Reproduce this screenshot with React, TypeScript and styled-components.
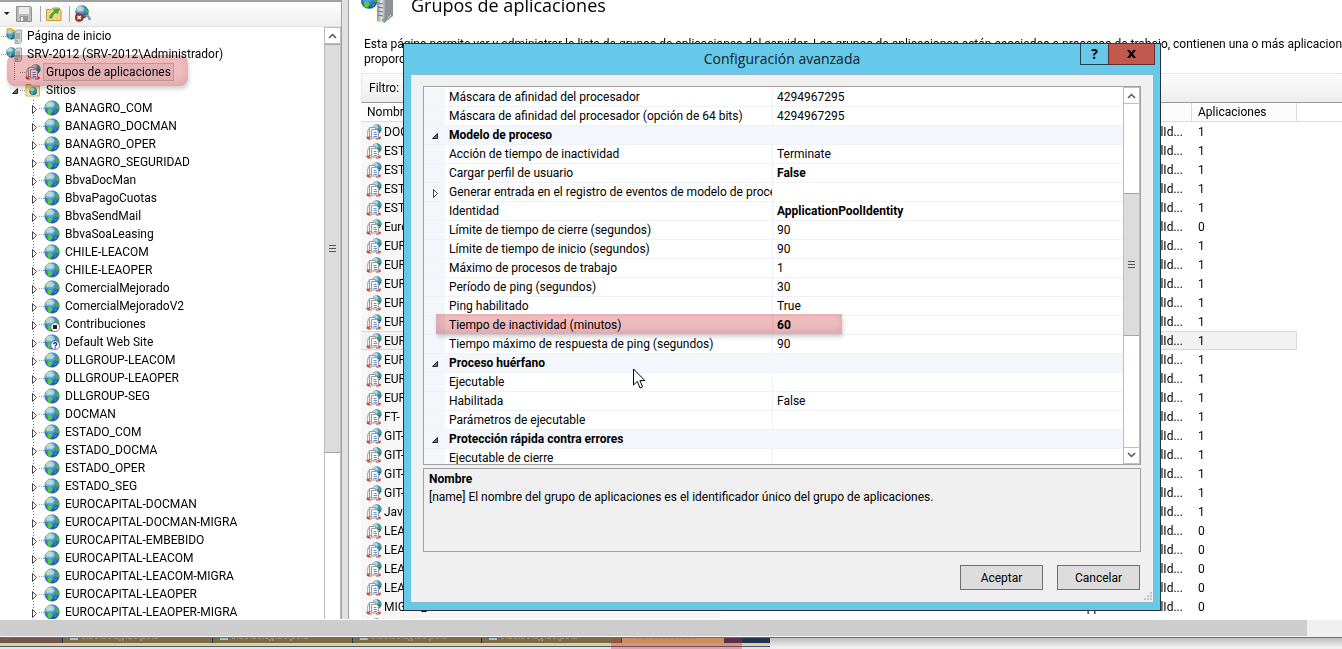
import React from "react";
import styled, { createGlobalStyle, css } from "styled-components";

const GlobalStyle = createGlobalStyle`
  *, *::before, *::after { box-sizing: border-box; }
  body {
    margin: 0;
    background: #fff;
    color: #000;
    font: 12px/18px Roboto, "Liberation Sans", sans-serif;
    overflow: hidden;
  }
  ul { list-style: none; margin: 0; padding: 0; }
  button { font: inherit; color: inherit; padding: 0; }
`;

/* ---------- page frame ---------- */

const Screen = styled.div`
  position: relative;
  display: flex;
  flex-direction: column;
  height: 100vh;
  overflow: hidden;
`;

const Workspace = styled.div`
  display: flex;
  flex: 1;
  min-height: 0;
`;

const Splitter = styled.div`
  flex: none;
  width: 8px;
  background: #e2e2e2;
  border: solid #a0a0a0;
  border-width: 0 1px;
`;

/* ---------- left panel ---------- */

const Sidebar = styled.aside`
  position: relative;
  display: flex;
  flex-direction: column;
  flex: none;
  width: 341px;
  border-top: 2px solid #a0a0a0;
`;

const Toolbar = styled.div`
  display: flex;
  align-items: center;
  gap: 5px;
  height: 25px;
  padding-left: 4px;
  background: linear-gradient(#fdfdfd, #efefef);
  border-bottom: 1px solid #e2e2e2;
`;

const ToolButton = styled.button`
  display: flex;
  border: 0;
  background: none;
`;

const ToolDivider = styled.span`
  width: 1px;
  height: 16px;
  margin-left: 2px;
  background: #a8a8a8;
`;

const TreeArea = styled.div`
  display: flex;
  flex: 1;
  min-height: 0;
`;

const Tree = styled.ul`
  flex: 1;
  overflow: hidden;
`;

const TreeItem = styled.li<{ $depth: number }>`
  display: flex;
  align-items: center;
  height: 18px;
  padding-left: ${(p) => (p.$depth === 0 ? 0 : p.$depth * 19 - 8)}px;
  white-space: nowrap;
`;

const Twist = styled.button`
  display: flex;
  width: 8px;
  height: 18px;
  border: 0;
  background: none;
`;

const Branch = styled.span`
  width: 6px;
  height: 1px;
  background: repeating-linear-gradient(90deg, #fff 0 1px, #9a9a9a 1px 2px);
`;

const TreeLabel = styled.span<{ $selected?: boolean }>`
  margin-left: 2px;
  padding: 0 3px;
  line-height: 18px;
  ${(p) =>
    p.$selected &&
    css`
      background: #f2f2f2;
      box-shadow: inset 0 0 0 1px #cfcfcf;
    `}
`;

/* ---------- scroll bars ---------- */

const Scroll = styled.div`
  display: flex;
  flex-direction: column;
  flex: none;
  width: 17px;
  background: #fff;
  border: solid #bdbdbd;
  border-width: 0 1px;
`;

const ScrollArrow = styled.button`
  display: flex;
  align-items: center;
  justify-content: center;
  flex: none;
  height: 17px;
  border: solid #bdbdbd;
  border-width: 1px 0;
  background: #fff;
`;

const Gap = styled.div<{ $grow: number }>`
  flex: ${(p) => p.$grow} 1 0;
`;

const Thumb = styled.div<{ $grow: number }>`
  display: flex;
  align-items: center;
  justify-content: center;
  flex: ${(p) => p.$grow} 1 0;
  background: #dcdcdc;
  border: solid #a6a6a6;
  border-width: 1px 0;
`;

const BottomScroll = styled.div`
  display: flex;
  flex: none;
  height: 17px;
  margin-top: 1px;
  padding-right: 35px;
  background: #f0f0f0;
  border-bottom: 1px solid #f4f4f4;
`;

const BottomThumb = styled.div`
  flex: 1;
  background: #cdcdcd;
`;

/* ---------- main panel ---------- */

const Main = styled.main`
  flex: 1;
  min-width: 0;
  padding-left: 12px;
  overflow: hidden;
`;

const PageHead = styled.header`
  display: flex;
  gap: 18px;
  height: 37px;
  overflow: hidden;
`;

const PageTitle = styled.h1`
  margin: -8px 0 0;
  font: 400 18px/26px "Open Sans", "Noto Sans", sans-serif;
`;

const Intro = styled.p`
  margin: 0;
  padding-left: 3px;
  height: 36px;
  line-height: 15px;
  white-space: nowrap;
`;

const FilterBar = styled.div`
  display: flex;
  align-items: center;
  height: 30px;
  padding-left: 7px;
  background: linear-gradient(#fcfcfc, #ededed);
  border: solid #e6e6e6;
  border-width: 1px 0 0 1px;
  border-bottom: 1px solid #989898;
`;

const PoolTable = styled.table`
  width: 100%;
  table-layout: fixed;
  border-collapse: separate;
  border-spacing: 0;

  th, td {
    height: 19px;
    padding: 0 0 0 6px;
    line-height: 18px;
    text-align: left;
    font-weight: 400;
    white-space: nowrap;
    overflow: hidden;
  }
  th {
    border-right: 1px solid #dcdcdc;
    border-bottom: 1px solid #dcdcdc;
    background: #fcfcfc;
  }
  th:last-child { border-right: 0; background: #fff; }
  td:first-child { padding-left: 5px; background: #f7f7f7; }
`;

const PoolRow = styled.tr<{ $selected?: boolean }>`
  ${(p) =>
    p.$selected &&
    css`
      && td:not(:last-child) {
        background: #f2f2f2;
        border: solid #d9d9d9;
        border-width: 1px 0;
        line-height: 16px;
      }
      && td:nth-child(4) { border-right-width: 1px; }
    `}
`;

const PoolName = styled.span`
  display: flex;
  align-items: center;
  gap: 2px;
`;

/* ---------- dialog ---------- */

const Dialog = styled.section`
  position: absolute;
  top: 43px;
  left: 403px;
  right: 181px;
  padding: 0 7px 7px;
  background: #67c9e9;
  border: 1px solid #2c3038;
`;

const TitleBar = styled.div`
  display: grid;
  grid-template-columns: 1fr auto 1fr;
  height: 30px;
`;

const DialogTitle = styled.h2`
  grid-column: 2;
  margin: 0;
  font: 400 14px/30px "Open Sans", "Noto Sans", sans-serif;
  color: #10202c;
`;

const CaptionButtons = styled.div`
  display: flex;
  justify-content: flex-end;
  margin: -1px -2px 0 0;
`;

const CaptionButton = styled.button<{ $close?: boolean }>`
  display: flex;
  align-items: center;
  justify-content: center;
  width: ${(p) => (p.$close ? 47 : 29)}px;
  height: 22px;
  margin-left: -1px;
  border: 1px solid ${(p) => (p.$close ? "#5c2f33" : "#22414e")};
  background: ${(p) => (p.$close ? "#c2594f" : "#67c9e9")};
  font: 700 14px/20px "Open Sans", sans-serif;
`;

const DialogBody = styled.div`
  position: relative;
  display: flex;
  flex-direction: column;
  padding: 11px 12px 12px;
  background: #f0f0f0;
  border: solid #8fb9c8;
  border-width: 1px 0;
`;

const GridFrame = styled.div`
  display: flex;
  height: 379px;
  border: 1px solid #a0a0a0;
  background: #fff;
  overflow: hidden;
`;

const GridView = styled.div`
  flex: 1;
  min-width: 0;
  padding-top: 1px;
  overflow: hidden;
`;

const PropTable = styled.table`
  width: 100%;
  table-layout: fixed;
  border-collapse: separate;
  border-spacing: 0;

  th, td {
    height: 19px;
    padding: 0 0 0 4px;
    font-weight: 400;
    text-align: left;
    line-height: 18px;
    white-space: nowrap;
    overflow: hidden;
    border-bottom: 1px solid #eff3f9;
  }
  td:first-child { padding-left: 7px; background: #f3f7fc; }
  td:first-child svg { display: block; }
`;

const PropRow = styled.tr<{ $category?: boolean; $changed?: boolean }>`
  ${(p) =>
    p.$category
      ? css`
          && th { background: #f3f7fc; font-weight: 700; }
        `
      : css`
          && th { border-right: 1px solid #eff3f9; padding-right: 0; }
          && td:last-child { font-weight: ${p.$changed ? 700 : 400}; }
        `}
`;

const HelpBox = styled.div`
  height: 84px;
  margin-top: 3px;
  padding: 1px 5px;
  border: 1px solid #a0a0a0;
  line-height: 18px;

  h3, p { margin: 0; font-size: 12px; }
`;

const Actions = styled.div`
  display: flex;
  justify-content: flex-end;
  gap: 14px;
  margin: 13px 1px 0 0;
`;

const ActionButton = styled.button`
  width: 83px;
  height: 25px;
  border: 1px solid #707070;
  background: #dddddd;
`;

const SizeGrip = styled.svg`
  position: absolute;
  right: 1px;
  bottom: 1px;
`;

/* ---------- annotations over the content ---------- */

const Marker = styled.div`
  position: absolute;
  background: #efbcbe;
  mix-blend-mode: multiply;
  box-shadow: 1px 3px 4px rgba(60, 40, 40, 0.22), inset 0 -4px 8px rgba(140, 80, 85, 0.18);
`;

const TreeMarker = styled(Marker)`
  top: 53px;
  left: 7px;
  width: 181px;
  height: 31px;
  border-radius: 8px;
`;

const RowMarker = styled(Marker)`
  top: 270px;
  left: 32px;
  width: 406px;
  height: 20px;
`;

const Pointer = styled.svg`
  position: absolute;
  top: 324px;
  left: 228px;
`;

/* ---------- strip of the window behind ---------- */

const Strip = styled.footer`
  display: flex;
  flex: none;
  height: 12px;
  border-top: 1px solid #2f7fc2;
  background: linear-gradient(#bdbdbd, #efefef 9px);
`;

const TabStrip = styled.div`
  position: relative;
  display: flex;
  width: 770px;
  background: linear-gradient(#22314d 0 5px, #e2d08e 5px 8px, #4b5878 8px 9px, #e1e3ec 9px);
`;

const BackTab = styled.div<{ $w: number; $bg: string }>`
  flex: none;
  width: ${(p) => p.$w}px;
  height: 5px;
  border-right: 1px solid #22314d;
  background: ${(p) => p.$bg};
`;

const TabMarker = styled.div`
  position: absolute;
  top: 0;
  left: 611px;
  width: 131px;
  height: 11px;
  background: rgba(190, 50, 60, 0.35);
`;

/* ---------- drawings ---------- */

const GlobeArt = () => (
  <>
    <circle cx="8" cy="8" r="7.3" fill="url(#ocean)" stroke="#3f6a9c" strokeWidth=".5" />
    <path d="M1.2 6.6C2 3.6 4.4 1.4 7.4 1.2 8.8 1.6 8.2 2.8 7 3.2 6.6 4.4 6.8 5.4 5.4 6 4.4 6.6 4.2 8 3 7.8 2 7.8 1.4 7.4 1.2 6.6z" fill="#8ccf98" />
    <path d="M11.4 2.8c1.8.4 3.4 2.6 3.7 4.8-.4 1.8-1.8 2.6-2.6 1.4-.2-1.2-1.8-1.4-1.8-2.8 0-1 1-1.800.7-3.400z" fill="#3fb43c" />
    <path d="M4.200 9.200c1.800-.4 4 .6 4.400 2-.2 1.200-1.400 1.600-1.600 3-.8.6-2.400-.2-3.200-1-.4-1.400-.6-2.800.4-4z" fill="#4bd03e" />
    <path d="M11.200 11.400l1.800-.6-.8 1.800-1.600 1z" fill="#45b53a" />
    <ellipse cx="6.400" cy="4.200" rx="4.200" ry="2.600" fill="#fff" opacity=".38" />
  </>
);

const Defs = () => (
  <svg width="0" height="0" style={{ position: "absolute" }} aria-hidden="true">
    <defs>
      <radialGradient id="ocean" cx=".4" cy=".3" r=".75">
        <stop offset="0" stopColor="#9ccdf2" />
        <stop offset=".5" stopColor="#3a80d4" />
        <stop offset="1" stopColor="#1c479c" />
      </radialGradient>
      <linearGradient id="steel" x1="0" x2="1">
        <stop offset="0" stopColor="#8d959b" />
        <stop offset=".5" stopColor="#e3e6e8" />
        <stop offset="1" stopColor="#8a9196" />
      </linearGradient>
    </defs>
  </svg>
);

type Badge = "stop" | "unknown";

const GlobeIcon = ({ badge }: { badge?: Badge }) => (
  <svg width="16" height="16" viewBox="0 0 16 16">
    <GlobeArt />
    {badge === "stop" && (
      <>
        <circle cx="11.2" cy="11.2" r="4.4" fill="#fff" stroke="#666" strokeWidth=".8" />
        <rect x="9" y="9" width="4" height="4" fill="#222" />
      </>
    )}
    {badge === "unknown" && (
      <>
        <circle cx="11.2" cy="11.2" r="4.400" fill="#fff" stroke="#3a5fae" strokeWidth=".8" />
        <path d="M9.600 10.200c0-2 3.200-2 3.200 0 0 1-1.600 1-1.600 2.200M11.200 13.200v1.200" fill="none" stroke="#2340a8" strokeWidth="1.400" />
      </>
    )}
  </svg>
);

const ServerIcon = ({ home }: { home?: boolean }) => (
  <svg width="16" height="16" viewBox="0 0 16 16">
    <g transform="translate(0 1) scale(.68)">
      <GlobeArt />
    </g>
    {home && <path d="M0 4.5L4 .8l4 3.7L9.5 2.5 5 0H1z" fill="#e8b52c" />}
    <path d="M9 3.5l2-1.500h4.500v12L13.500 15.500H9z" fill="#d3d7da" stroke="#8a9298" strokeWidth=".8" />
    <path d="M10 6h4M10 8h4M10 10h4" stroke="#747c82" strokeWidth=".9" />
    <rect x="10" y="12.500" width="2" height="1.200" fill="#3bbf2e" />
  </svg>
);

const SitesIcon = () => (
  <svg width="16" height="16" viewBox="0 0 16 16">
    <path d="M1 2.500h5l1 1.500h7.500v10H1z" fill="#f0cf72" stroke="#c29a3a" strokeWidth=".8" />
    <rect x="1.500" y="6" width="12.600" height="7.600" fill="#f9e3a0" />
    <g transform="translate(4 5) scale(.52)">
      <GlobeArt />
    </g>
  </svg>
);

const PoolIcon = () => (
  <svg width="16" height="16" viewBox="0 0 16 16">
    <g transform="translate(5.600 0) scale(.64)">
      <GlobeArt />
    </g>
    <path d="M2.600 4.500C1.400 7 1 10 1.600 12.500" fill="none" stroke="#b0b0b0" strokeWidth="1.200" />
    <path d="M3.500 3.500h6v9h-6z" fill="#fafafa" stroke="#9a9a9a" />
    <path d="M5.500 5.500h5l2 2v6.500h-7z" fill="#fff" stroke="#9a9a9a" />
    <path d="M7.500 8.500h3M7.500 10.500h3.500M7.500 12.500h3.500" stroke="#5580c0" strokeWidth=".9" />
    <path d="M.6 12.500h3.200v2h1.700v1H2.200L.6 14.600z" fill="#c94a42" />
    <path d="M12.800 12.800h2v1.600l-1.400 1.100H10v-1h2.800z" fill="#c94a42" />
  </svg>
);

const Chevron = ({ down }: { down?: boolean }) => (
  <svg width="9" height="6" viewBox="0 0 9 6">
    <path d={down ? "M1 1l3.500 3.500L8 1" : "M1 5l3.500-3.500L8 5"} fill="none" stroke="#555" strokeWidth="1.500" />
  </svg>
);

const Grip = () => (
  <svg width="7" height="7" viewBox="0 0 7 7">
    <path d="M0 .5h7M0 3.500h7M0 6.500h7" stroke="#555" />
  </svg>
);

const TwistIcon = ({ open, dots }: { open?: boolean; dots?: boolean }) => (
  <svg width="8" height="18" viewBox="0 0 8 18">
    {dots && <path d="M3.500 1v1M3.500 4v1M3.500 16v1" stroke="#777" />}
    {open ? (
      <path d="M1.500 12.500h5v-5z" fill="#777" stroke="#222" />
    ) : (
      <path d="M2.500 6.500v8L6.500 10.500z" fill="#fff" stroke="#444" />
    )}
  </svg>
);

/* ---------- data ---------- */

const sites: { name: string; badge?: Badge }[] = [
  { name: "BANAGRO_COM" },
  { name: "BANAGRO_DOCMAN" },
  { name: "BANAGRO_OPER" },
  { name: "BANAGRO_SEGURIDAD" },
  { name: "BbvaDocMan" },
  { name: "BbvaPagoCuotas" },
  { name: "BbvaSendMail" },
  { name: "BbvaSoaLeasing" },
  { name: "CHILE-LEACOM" },
  { name: "CHILE-LEAOPER" },
  { name: "ComercialMejorado" },
  { name: "ComercialMejoradoV2" },
  { name: "Contribuciones", badge: "stop" },
  { name: "Default Web Site", badge: "unknown" },
  { name: "DLLGROUP-LEACOM" },
  { name: "DLLGROUP-LEAOPER" },
  { name: "DLLGROUP-SEG" },
  { name: "DOCMAN" },
  { name: "ESTADO_COM" },
  { name: "ESTADO_DOCMA" },
  { name: "ESTADO_OPER" },
  { name: "ESTADO_SEG" },
  { name: "EUROCAPITAL-DOCMAN" },
  { name: "EUROCAPITAL-DOCMAN-MIGRA" },
  { name: "EUROCAPITAL-EMBEBIDO" },
  { name: "EUROCAPITAL-LEACOM" },
  { name: "EUROCAPITAL-LEACOM-MIGRA" },
  { name: "EUROCAPITAL-LEAOPER" },
  { name: "EUROCAPITAL-LEAOPER-MIGRA" },
];

const pools: [string, number | null][] = [
  ["DOCMAN", 1],
  ["ESTADO", 1],
  ["ESTADO", 1],
  ["ESTADO", 1],
  ["ESTADO", 1],
  ["Euro", 0],
  ...Array.from({ length: 9 }, (): [string, number] => ["EURO", 1]),
  ["FT-", 1],
  ["GIT-", 1],
  ["GIT-", 1],
  ["GIT-", 1],
  ["GIT-", 1],
  ["Java", 1],
  ["LEA", 0],
  ["LEA", 0],
  ["LEA", 0],
  ["LEA", 0],
  ["MIGRA_", 0],
  ["", null],
];
const SELECTED_POOL = 11;

type Prop = { label: string; value?: string; changed?: boolean; category?: boolean; closed?: boolean };

const props: Prop[] = [
  { label: "Máscara de afinidad del procesador", value: "4294967295" },
  { label: "Máscara de afinidad del procesador (opción de 64 bits)", value: "4294967295" },
  { label: "Modelo de proceso", category: true },
  { label: "Acción de tiempo de inactividad", value: "Terminate" },
  { label: "Cargar perfil de usuario", value: "False", changed: true },
  { label: "Generar entrada en el registro de eventos de modelo de proceso", closed: true },
  { label: "Identidad", value: "ApplicationPoolIdentity", changed: true },
  { label: "Límite de tiempo de cierre (segundos)", value: "90" },
  { label: "Límite de tiempo de inicio (segundos)", value: "90" },
  { label: "Máximo de procesos de trabajo", value: "1" },
  { label: "Período de ping (segundos)", value: "30" },
  { label: "Ping habilitado", value: "True" },
  { label: "Tiempo de inactividad (minutos)", value: "60", changed: true },
  { label: "Tiempo máximo de respuesta de ping (segundos)", value: "90" },
  { label: "Proceso huérfano", category: true },
  { label: "Ejecutable" },
  { label: "Habilitada", value: "False" },
  { label: "Parámetros de ejecutable" },
  { label: "Protección rápida contra errores", category: true },
  { label: "Ejecutable de cierre" },
];

const backTabs: [number, string][] = [
  [63, "#70534d"],
  [150, "#776b4a"],
  [140, "#776b4a"],
  [129, "#776b4a"],
  [140, "#776b4a"],
  [103, "#d4c374"],
];

/* ---------- parts ---------- */

const ConnectionsPanel = () => (
  <Sidebar>
    <Toolbar>
      <ToolButton aria-label="Conectar">
        <svg width="6" height="4" viewBox="0 0 6 4">
          <path d="M0 0h5.500L2.800 3z" fill="#111" />
        </svg>
      </ToolButton>
      <ToolButton aria-label="Guardar" disabled>
        <svg width="18" height="18" viewBox="0 0 18 18">
          <path d="M1.500 1.500h14l1 1v14h-15z" fill="#bdbdbd" stroke="#8f8f8f" />
          <rect x="4" y="2" width="10" height="7" fill="#ececec" />
          <rect x="5" y="11" width="8" height="5" fill="#979797" />
          <rect x="6" y="12" width="2" height="4" fill="#eee" />
        </svg>
      </ToolButton>
      <ToolDivider />
      <ToolButton aria-label="Subir">
        <svg width="16" height="16" viewBox="0 0 16 16">
          <path d="M.5 3.500h5L7 2h6.500v2H15v10.500H.5z" fill="#f1d587" stroke="#bf9a45" />
          <path d="M3.500 12C4 8.500 6 6.500 8.500 5.500L7.500 3.500 13 3l-1.500 5-1.300-1.500C8 7.500 6.500 9 6 12z" fill="#3fae2c" stroke="#2c8420" strokeWidth=".5" />
        </svg>
      </ToolButton>
      <ToolDivider />
      <ToolButton aria-label="Desconectar">
        <svg width="18" height="18" viewBox="0 0 18 18">
          <g transform="translate(0 0) scale(.88)">
            <GlobeArt />
          </g>
          <path d="M11 11c2-1 3 1 4 4" fill="none" stroke="#8d979e" strokeWidth="2.500" />
          <circle cx="4.200" cy="12.500" r="4" fill="#cf2b26" stroke="#8f1512" strokeWidth=".7" />
          <path d="M2.600 10.900l3.200 3.200M5.800 10.900l-3.200 3.200" stroke="#fff" strokeWidth="1.400" />
        </svg>
      </ToolButton>
    </Toolbar>
    <TreeArea>
      <Tree>
        <TreeItem $depth={0}>
          <Branch />
          <ServerIcon home />
          <TreeLabel>Página de inicio</TreeLabel>
        </TreeItem>
        <TreeItem $depth={0}>
          <Branch />
          <ServerIcon />
          <TreeLabel>SRV-2012 (SRV-2012\Administrador)</TreeLabel>
        </TreeItem>
        <TreeItem $depth={1}>
          <svg width="8" height="18" viewBox="0 0 8 18">
            <path d="M3.500 0v18" stroke="#888" strokeDasharray="1 1" />
          </svg>
          <Branch />
          <PoolIcon />
          <TreeLabel $selected>Grupos de aplicaciones</TreeLabel>
        </TreeItem>
        <TreeItem $depth={1}>
          <Twist aria-label="Contraer Sitios">
            <TwistIcon open />
          </Twist>
          <Branch />
          <SitesIcon />
          <TreeLabel>Sitios</TreeLabel>
        </TreeItem>
        {sites.map((s) => (
          <TreeItem key={s.name} $depth={2}>
            <Twist aria-label={`Expandir ${s.name}`}>
              <TwistIcon dots />
            </Twist>
            <Branch />
            <GlobeIcon badge={s.badge} />
            <TreeLabel>{s.name}</TreeLabel>
          </TreeItem>
        ))}
      </Tree>
      <Scroll>
        <ScrollArrow aria-label="Desplazar arriba">
          <Chevron />
        </ScrollArrow>
        <Thumb $grow={409}>
          <Grip />
        </Thumb>
        <Gap $grow={167} />
      </Scroll>
    </TreeArea>
    <TreeMarker />
  </Sidebar>
);

const PoolsPage = () => (
  <Main>
    <PageHead>
      <svg width="32" height="24" viewBox="0 0 32 24">
        <g transform="translate(-1 -9) scale(1.150)">
          <GlobeArt />
        </g>
        <path d="M16 0h9v22l-2 1-7-2z" fill="url(#steel)" />
        <path d="M25 0h7v16l-9 7z" fill="#8c9195" />
        <path d="M17 3l5 1M17 7l5 1M17 11l5 1M17 15l5 1" stroke="#6b7277" strokeWidth="1.200" />
        <circle cx="22" cy="20" r="1.300" fill="#4fcf2e" />
        <path d="M27 18l3-3" stroke="#d8dbdd" />
      </svg>
      <PageTitle>Grupos de aplicaciones</PageTitle>
    </PageHead>
    <Intro>
      Esta página permite ver y administrar la lista de grupos de aplicaciones del servidor. Los grupos de aplicaciones
      están asociados a procesos de trabajo, contienen una o más aplicaciones, y
      <br />
      proporcionan aislamiento entre distintas aplicaciones.
    </Intro>
    <FilterBar>Filtro:</FilterBar>
    <PoolTable>
      <colgroup>
        <col width="360" />
        <col width="352" />
        <col width="119" />
        <col width="105" />
        <col />
      </colgroup>
      <thead>
        <tr>
          <th>Nombre</th>
          <th />
          <th>Identidad</th>
          <th>Aplicaciones</th>
          <th />
        </tr>
      </thead>
      <tbody>
        {pools.map(([name, apps], i) => (
          <PoolRow key={i} $selected={i === SELECTED_POOL}>
            <td>
              <PoolName>
                <PoolIcon />
                {name}
              </PoolName>
            </td>
            <td />
            <td>{apps !== null && "ApplicationPoolId..."}</td>
            <td>{apps}</td>
            <td />
          </PoolRow>
        ))}
      </tbody>
    </PoolTable>
  </Main>
);

const SettingsDialog = () => (
  <Dialog role="dialog" aria-labelledby="dialog-title">
    <TitleBar>
      <DialogTitle id="dialog-title">Configuración avanzada</DialogTitle>
      <CaptionButtons>
        <CaptionButton aria-label="Ayuda">?</CaptionButton>
        <CaptionButton $close aria-label="Cerrar">
          <svg width="9" height="8" viewBox="0 0 10 9">
            <path d="M0 0h3.200L5 2.700 6.800 0H10L6.700 4.500 10 9H6.800L5 6.300 3.200 9H0l3.300-4.500z" fill="#000" />
          </svg>
        </CaptionButton>
      </CaptionButtons>
    </TitleBar>
    <DialogBody>
      <GridFrame>
        <GridView>
          <PropTable>
            <colgroup>
              <col width="21" />
              <col width="328" />
              <col />
            </colgroup>
            <tbody>
              {props.map((p) => (
                <PropRow key={p.label} $category={p.category} $changed={p.changed}>
                  <td>{(p.category || p.closed) && <TwistIcon open={p.category} />}</td>
                  <th scope="row" colSpan={p.category ? 2 : 1}>
                    {p.label}
                  </th>
                  {!p.category && <td>{p.value}</td>}
                </PropRow>
              ))}
            </tbody>
          </PropTable>
        </GridView>
        <Scroll>
          <ScrollArrow aria-label="Desplazar arriba">
            <Chevron />
          </ScrollArrow>
          <Gap $grow={90} />
          <Thumb $grow={141}>
            <Grip />
          </Thumb>
          <Gap $grow={112} />
          <ScrollArrow aria-label="Desplazar abajo">
            <Chevron down />
          </ScrollArrow>
        </Scroll>
      </GridFrame>
      <HelpBox>
        <h3>Nombre</h3>
        <p>[name] El nombre del grupo de aplicaciones es el identificador único del grupo de aplicaciones.</p>
      </HelpBox>
      <Actions>
        <ActionButton>Aceptar</ActionButton>
        <ActionButton>Cancelar</ActionButton>
      </Actions>
      <SizeGrip width="9" height="9" viewBox="0 0 9 9">
        <path
          d="M7 0h2v2H7zM4 3h2v2H4zM7 3h2v2H7zM1 6h2v2H1zM4 6h2v2H4zM7 6h2v2H7z"
          fill="#c4c4c4"
        />
      </SizeGrip>
    </DialogBody>
    <RowMarker />
    <Pointer width="14" height="22" viewBox="0 0 14 22">
      <path d="M1.500 1v16l3.800-3.600L8 20l2.600-1.200-2.700-6.200h5z" fill="#fff" stroke="#000" />
    </Pointer>
  </Dialog>
);

const BackgroundTabs = () => (
  <Strip>
    <TabStrip>
      {backTabs.map(([w, bg], i) => (
        <BackTab key={i} $w={w} $bg={bg}>
          <svg width="130" height="4" viewBox="0 0 130 4" style={{ display: "block", maxWidth: "100%" }}>
            {i > 0 && <path d="M7 0h8v2H7z" fill="#a9bdd0" />}
            <path d={i > 0 ? "M19 .5h78" : "M2 .5h18"} stroke="#a09474" strokeDasharray="3 2 1 1 4 2" />
            {i > 0 && i < 5 && <path d="M57 1v2M60 1v2M78 1v2" stroke="#b9ae92" />}
          </svg>
        </BackTab>
      ))}
      <TabMarker />
    </TabStrip>
  </Strip>
);

export default function App() {
  return (
    <>
      <GlobalStyle />
      <Defs />
      <Screen>
        <Workspace>
          <ConnectionsPanel />
          <Splitter />
          <PoolsPage />
        </Workspace>
        <BottomScroll>
          <BottomThumb />
        </BottomScroll>
        <BackgroundTabs />
        <SettingsDialog />
      </Screen>
    </>
  );
}
